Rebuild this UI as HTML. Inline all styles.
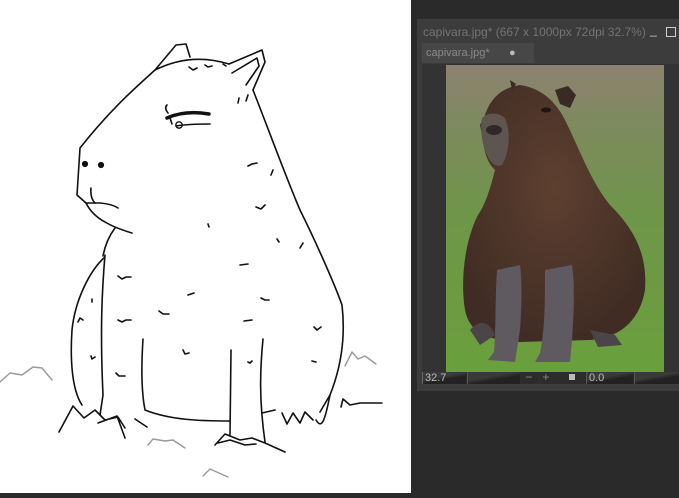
<!DOCTYPE html>
<html><head><meta charset="utf-8"><style>
html,body{margin:0;padding:0;width:679px;height:493px;overflow:hidden;background:#2a2a2a;font-family:"Liberation Sans",sans-serif}
#canvas{position:absolute;left:0;top:0;width:411px;height:493px;background:#fff}
#win{position:absolute;left:417px;top:19px;width:262px;height:372px;background:#3c3c3c}
#title{position:absolute;left:0;top:0;width:262px;height:24px;color:#747474;font-size:12px;line-height:26px;padding-left:6px;box-sizing:border-box;white-space:nowrap}
#tab{position:absolute;left:5px;top:24px;width:112px;height:20px;background:#474747;color:#8a8a8a;font-size:11px;line-height:20px;padding-left:4px;box-sizing:border-box}
#content{position:absolute;left:5px;top:45px;width:257px;height:309px;background:#333}
#status{position:absolute;left:5px;top:353px;width:257px;height:12px;background:#2c2c2c}
.sb{position:absolute;top:0;height:12px;background:linear-gradient(170deg,#3a3a3a 40%,#222 60%);border-left:1px solid #555;color:#bbb;font-size:11px;line-height:12px;padding-left:2px;box-sizing:border-box}
</style></head><body>
<div id="canvas">
<svg width="411" height="493" viewBox="0 0 411 493" fill="none" stroke="#111" stroke-width="1.6" stroke-linecap="round" stroke-linejoin="round">
<path d="M155,70 C175,60 200,55 229,64 M155,70 L176,45 L186,44 L190,57 M155,70 C135,88 110,110 80,148 L77,195 L86,203 L100,203 Q112,204 118,208"/>
<path d="M229,64 L262,50 L265,62 L253,90 M232,73 L257,58 L259,66 L246,85"/>
<path d="M253,90 C265,120 285,175 300,210 C315,240 335,285 342,305 C346,340 340,370 330,395 L320,412"/>
<path d="M91,188 Q90,198 95,203 M86,203 Q92,215 105,222 Q115,228 132,233 M115,228 Q106,240 103,256"/>
<circle cx="85" cy="164" r="2.3" fill="#111"/><circle cx="101" cy="165" r="2.3" fill="#111"/>
<path d="M167,118 Q185,110 209,114" stroke-width="3.5"/>
<path d="M168,113 Q164,108 167,105 M170,118 L172,124 M176,126 Q188,124 210,124"/>
<circle cx="179" cy="125" r="3.2" stroke-width="1.3"/>
<path d="M189,67 l4,3 l4,-2 M205,65 l3,2 l4,-1 M223,64 l3,2 M238,103 l1,-5 M246,101 l2,-6 M248,166 l4,-2 l5,-1 M271,175 l2,-5 M256,207 l5,2 l4,-4 M208,224 l1,3 M277,239 l2,3 M300,248 l3,-5"/>
<path d="M118,276 l4,3 l4,-2 l5,0 M92,299 l0,3 M78,322 l2,-4 l3,2 M118,320 l4,2 l4,-2 l5,0 M159,311 l4,3 l6,0 M188,295 l6,-2 M240,265 l8,-1 M261,298 l4,2 l4,0 M244,321 l8,-1 M314,327 l3,3 l4,-3 M91,356 l1,3 l3,-2 M116,373 l3,3 l6,0 M183,350 l2,4 l4,-1 M248,362 l2,1 l2,-2 M312,361 l4,1"/>
<path d="M105,257 C90,270 75,300 72,330 C70,360 72,390 82,405 M105,255 C102,290 100,330 103,395 L100,415"/>
<path d="M143,339 C141,370 142,395 145,410 C170,420 200,421 230,421"/>
<path d="M231,350 L230,435 M263,339 C260,370 259,400 265,442 M262,413 L275,410"/>
<path d="M330,395 C325,420 322,430 316,420"/>
<path d="M59,432 L73,406 L84,418 L95,410 L105,420 L118,417 L125,428 M98,423 L117,416 L125,438 M135,419 L147,427"/>
<path d="M215,445 L225,434 L240,440 L252,438 L265,443 L285,452 M218,443 L230,440 L245,445 L256,444"/>
<path d="M341,407 L343,399 L350,405 L360,403 L382,403"/>
<path d="M282,413 L287,424 L293,413 L300,423 L305,412 L313,420"/>
<g stroke="#999" stroke-width="1.4">
<path d="M0,382 L10,373 L22,375 L33,367 L42,368 L52,380"/>
<path d="M345,366 L352,352 L358,359 L365,356 L376,364"/>
<path d="M148,445 L153,439 L165,441 L173,440 L185,448"/>
<path d="M203,476 L210,469 L219,473 L228,477"/>
</g>
</svg>
</div>
<div id="win">
<div id="title">capivara.jpg* (667 x 1000px 72dpi 32.7%)<span style="position:absolute;left:233px;top:-2px;color:#ccc">_</span><span style="position:absolute;left:249px;top:8px;width:8px;height:8px;border:1px solid #ccc"></span></div>
<div id="tab">capivara.jpg*<span style="position:absolute;left:87px;top:0;color:#bbb">●</span></div>
<div id="content">
<svg style="position:absolute;left:24px;top:1px" width="218" height="308" viewBox="446 65 218 308">
<defs>
<linearGradient id="bg" x1="0" y1="0" x2="0" y2="1"><stop offset="0" stop-color="#8c8270"/><stop offset="0.2" stop-color="#7d8a5e"/><stop offset="0.5" stop-color="#6e9648"/><stop offset="1" stop-color="#6aa03c"/></linearGradient>
<radialGradient id="fur" cx="0.5" cy="0.4" r="0.6"><stop offset="0" stop-color="#5e4030"/><stop offset="1" stop-color="#402c24"/></radialGradient>
</defs>
<rect x="446" y="65" width="218" height="308" fill="url(#bg)"/>
<path d="M478,215 C465,240 460,280 465,310 C470,335 490,340 520,342 L590,340 C620,338 640,320 645,290 C648,250 630,225 610,205 C590,180 580,150 565,120 C555,100 540,88 520,85 C500,88 490,100 485,115 L480,125 L483,140 C485,158 490,165 495,170 C490,190 485,205 478,215 Z" fill="url(#fur)"/>
<path d="M482,118 C488,112 498,112 505,118 C512,135 508,155 502,165 C495,168 490,162 487,155 C482,145 480,130 482,118 Z" fill="#5e5550"/>
<path d="M555,90 L568,86 L576,95 L570,108 L560,104 Z" fill="#3a2a24"/>
<path d="M510,80 L516,84 L512,90 Z" fill="#3a2a24"/>
<ellipse cx="546" cy="110" rx="5" ry="2.5" fill="#1e1410"/>
<ellipse cx="494" cy="130" rx="8" ry="5" fill="#2e2828"/>
<path d="M497,270 C495,300 496,330 494,352 L488,360 L515,362 L520,330 C522,300 522,280 520,265 Z" fill="#5f5a60"/>
<path d="M545,270 C545,300 545,330 540,353 L535,362 L570,362 L572,340 C574,310 575,285 572,265 Z" fill="#5f5a60"/>
<path d="M470,330 C480,318 490,322 495,335 L480,345 Z M590,330 L615,335 L622,345 L598,347 Z" fill="#4a4548"/>
</svg>
</div>
<div id="status">
<div class="sb" style="left:0;width:44px;border-left:1px solid #666">32.7</div>
<div class="sb" style="left:45px;width:53px"></div>
<div style="position:absolute;left:100px;top:-1px;color:#888;font-size:12px;line-height:13px">&nbsp;−&nbsp;&nbsp;&nbsp;+</div>
<div style="position:absolute;left:147px;top:2px;width:6px;height:6px;background:#bbb"></div>
<div class="sb" style="left:164px;width:47px">0.0</div>
<div class="sb" style="left:212px;width:45px"></div>
</div>
</div>
</body></html>
